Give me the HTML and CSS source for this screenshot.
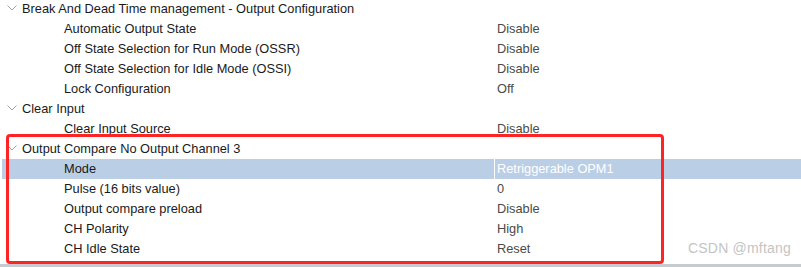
FILE: index.html
```html
<!DOCTYPE html>
<html>
<head>
<meta charset="utf-8">
<link rel="stylesheet" href="styles.css">
</head>
<body>
<div class="tree">
  <div class="row group">
    <span class="label"><svg class="chev" width="10" height="6" viewBox="0 0 10 6"><path d="M0.5 0.5 L5 5 L9.5 0.5" fill="none" stroke="#a0a0a0" stroke-width="1"/></svg>Break And Dead Time management - Output Configuration</span>
    <span class="value"></span>
  </div>
  <div class="row child"><span class="label">Automatic Output State</span><span class="value">Disable</span></div>
  <div class="row child"><span class="label">Off State Selection for Run Mode (OSSR)</span><span class="value">Disable</span></div>
  <div class="row child"><span class="label">Off State Selection for Idle Mode (OSSI)</span><span class="value">Disable</span></div>
  <div class="row child"><span class="label">Lock Configuration</span><span class="value">Off</span></div>
  <div class="row group">
    <span class="label"><svg class="chev" width="10" height="6" viewBox="0 0 10 6"><path d="M0.5 0.5 L5 5 L9.5 0.5" fill="none" stroke="#a0a0a0" stroke-width="1"/></svg>Clear Input</span>
    <span class="value"></span>
  </div>
  <div class="row child"><span class="label">Clear Input Source</span><span class="value">Disable</span></div>
  <div class="row group">
    <span class="label"><svg class="chev" width="10" height="6" viewBox="0 0 10 6"><path d="M0.5 0.5 L5 5 L9.5 0.5" fill="none" stroke="#a0a0a0" stroke-width="1"/></svg>Output Compare No Output Channel 3</span>
    <span class="value"></span>
  </div>
  <div class="row child selected"><span class="label">Mode</span><span class="value">Retriggerable OPM1</span></div>
  <div class="row child"><span class="label">Pulse (16 bits value)</span><span class="value">0</span></div>
  <div class="row child"><span class="label">Output compare preload</span><span class="value">Disable</span></div>
  <div class="row child"><span class="label">CH Polarity</span><span class="value">High</span></div>
  <div class="row child"><span class="label">CH Idle State</span><span class="value">Reset</span></div>
</div>
<div class="bottombar"></div>
<div class="annot"></div>
<div class="watermark">CSDN @mftang</div>
</body>
</html>
```
FILE: styles.css
```css
html, body {
  margin: 0;
  padding: 0;
  background: #ffffff;
  width: 801px;
  height: 267px;
  overflow: hidden;
  position: relative;
}
body {
  font-family: "Liberation Sans", Arial, sans-serif;
  font-size: 12.8px;
  color: #1a1a1a;
}
.tree {
  margin-top: -1px;
  height: 265px;
}
.row {
  display: flex;
  height: 20px;
  line-height: 20px;
  margin-left: 2px;
}
.label {
  width: 492px;
  flex: none;
  white-space: nowrap;
  display: flex;
  align-items: center;
}
.group .label {
  padding-left: 5px;
  width: 487px;
}
.chev {
  margin-right: 5px;
  margin-top: -3px;
}
.child .label {
  padding-left: 62px;
  width: 430px;
}
.value {
  flex: 1;
  border-left: 1px solid transparent;
  padding-left: 2px;
  color: #4a4a4a;
  white-space: nowrap;
}
.selected {
  background: #bacee5;
}
.selected .value {
  border-left-color: #ffffff;
  color: #ffffff;
}
.bottombar {
  position: absolute;
  left: 0;
  right: 0;
  top: 264px;
  height: 3px;
  background: #c6cbd0;
}
.annot {
  position: absolute;
  left: 6px;
  top: 134px;
  width: 652px;
  height: 124px;
  border: 3px solid #ff2424;
  border-radius: 4px;
}
.watermark {
  position: absolute;
  left: 688px;
  top: 240px;
  font-size: 14px;
  color: #c4c4c4;
  letter-spacing: 0.2px;
}
```
